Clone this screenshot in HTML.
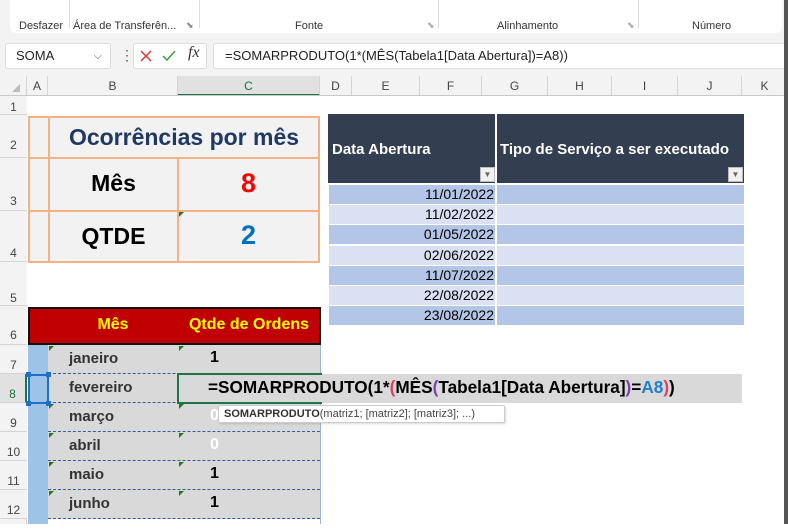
<!DOCTYPE html>
<html><head><meta charset="utf-8"><style>
*{margin:0;padding:0;box-sizing:border-box}
body{width:788px;height:524px;overflow:hidden;background:#fff;font-family:"Liberation Sans",Calibri,sans-serif;position:relative}
.a{position:absolute}
.rh{position:absolute;left:0;width:27px;text-align:center;font-size:12px;color:#444;background:#f3f3f3;border-bottom:1px solid #d4d4d4}
.ch{position:absolute;top:76px;height:20px;font-size:12px;color:#444;text-align:center;line-height:20px;border-right:1px solid #d4d4d4;background:#f3f3f3}
.dr{position:absolute;left:329px;width:415px;height:19px;font-size:14px;color:#000}
.dr span{position:absolute;left:0;width:166px;text-align:right;padding-right:1px;line-height:19px}
.gl{position:absolute;top:20px;font-size:11px;color:#333}
.mr{position:absolute;left:48px;width:272px;height:29px;background:#d9d9d9;border-bottom:1px dashed #3a5a9a;font-weight:bold;font-size:15px;color:#333}
.tri{position:absolute;width:0;height:0;border-top:5px solid #1e7a1e;border-right:5px solid transparent}
</style></head><body>
<div class="a" style="left:0;top:0;width:788px;height:36px;background:#f3f3f3"></div>
<div class="a" style="left:10px;top:0;width:772px;height:33px;background:#fff;border-radius:0 0 6px 6px"></div>
<div class="gl" style="left:19px">Desfazer</div>
<div class="a" style="left:69px;top:0;width:1px;height:28px;background:#ddd"></div>
<div class="gl" style="left:73px">Área de Transferên...</div>
<div class="gl" style="left:186px;font-size:9px;color:#888">⬊</div>
<div class="a" style="left:199px;top:0;width:1px;height:28px;background:#ddd"></div>
<div class="gl" style="left:295px">Fonte</div>
<div class="gl" style="left:427px;font-size:9px;color:#aaa">⬊</div>
<div class="a" style="left:438px;top:0;width:1px;height:28px;background:#ddd"></div>
<div class="gl" style="left:497px">Alinhamento</div>
<div class="gl" style="left:627px;font-size:9px;color:#aaa">⬊</div>
<div class="a" style="left:638px;top:0;width:1px;height:28px;background:#ddd"></div>
<div class="gl" style="left:692px">Número</div>
<div class="a" style="left:0;top:36px;width:788px;height:40px;background:#f3f3f3"></div>
<div class="a" style="left:5px;top:43px;width:106px;height:26px;background:#fff;border:1px solid #ddd;border-radius:3px;font-size:13px;line-height:24px;padding-left:10px;color:#222">SOMA<span style="position:absolute;right:8px;color:#555;font-size:11px">⌵</span></div>
<div class="a" style="left:120px;top:47px;font-size:14px;color:#555">⋮</div>
<div class="a" style="left:133px;top:43px;width:74px;height:26px;background:#fff;border:1px solid #ddd;border-radius:3px"></div>
<svg class="a" style="left:139px;top:49px" width="14" height="14"><path d="M2 2L12 12M12 2L2 12" stroke="#e03030" stroke-width="1.5"/></svg>
<svg class="a" style="left:161px;top:49px" width="16" height="14"><path d="M2 7L6 11L14 2" stroke="#3aa03a" stroke-width="1.5" fill="none"/></svg>
<div class="a" style="left:188px;top:44px;font-family:'Liberation Serif',serif;font-style:italic;font-size:16px;color:#333">fx</div>
<div class="a" style="left:213px;top:43px;width:575px;height:26px;background:#fff;border:1px solid #ddd;border-radius:3px;font-size:13px;line-height:24px;padding-left:11px;color:#222">=SOMARPRODUTO(1*(MÊS(Tabela1[Data Abertura])=A8))</div>
<div class="a" style="left:0;top:76px;width:27px;height:20px;background:#f3f3f3;border-right:1px solid #d4d4d4"></div>
<div class="a" style="left:12px;top:84px;border-bottom:8px solid #bbb;border-left:8px solid transparent"></div>
<div class="ch" style="left:27px;width:21px">A</div>
<div class="ch" style="left:48px;width:130px">B</div>
<div class="ch" style="left:178px;width:142px;background:#e1e1e1;color:#1e6e3e;border-bottom:2px solid #217346">C</div>
<div class="ch" style="left:320px;width:32px">D</div>
<div class="ch" style="left:352px;width:68px">E</div>
<div class="ch" style="left:420px;width:62px">F</div>
<div class="ch" style="left:482px;width:66px">G</div>
<div class="ch" style="left:548px;width:64px">H</div>
<div class="ch" style="left:612px;width:66px">I</div>
<div class="ch" style="left:678px;width:64px">J</div>
<div class="ch" style="left:742px;width:46px">K</div>
<div class="a" style="left:0;top:95px;width:788px;height:1px;background:#c8c8c8"></div>
<div class="a" style="left:0;top:96px;width:27px;height:428px;background:#f3f3f3;border-right:1px solid #d4d4d4"></div>
<div class="rh" style="top:96px;height:19px;line-height:22px">1</div>
<div class="rh" style="top:115px;height:43px;line-height:60px">2</div>
<div class="rh" style="top:158px;height:53px;line-height:86px">3</div>
<div class="rh" style="top:211px;height:51px;line-height:84px">4</div>
<div class="rh" style="top:262px;height:44px;line-height:72px">5</div>
<div class="rh" style="top:306px;height:39px;line-height:58px">6</div>
<div class="rh" style="top:345px;height:29px;line-height:40px">7</div>
<div class="rh" style="top:374px;height:29px;line-height:40px;background:#e1e1e1;color:#1e6e3e;border-right:2px solid #217346">8</div>
<div class="rh" style="top:403px;height:29px;line-height:40px">9</div>
<div class="rh" style="top:432px;height:29px;line-height:40px">10</div>
<div class="rh" style="top:461px;height:29px;line-height:40px">11</div>
<div class="rh" style="top:490px;height:29px;line-height:40px">12</div>
<div class="a" style="left:28px;top:116px;width:292px;height:147px;background:#f2f2f2;border:2px solid #f4b183"></div>
<div class="a" style="left:48px;top:116px;width:2px;height:147px;background:#f4b183"></div>
<div class="a" style="left:28px;top:157px;width:292px;height:2px;background:#f4b183"></div>
<div class="a" style="left:28px;top:210px;width:292px;height:2px;background:#f4b183"></div>
<div class="a" style="left:177px;top:157px;width:2px;height:106px;background:#f4b183"></div>
<div class="a" style="left:50px;top:124px;width:268px;text-align:center;font-size:23px;font-weight:bold;color:#1f3864;white-space:nowrap">Ocorrências por mês</div>
<div class="a" style="left:50px;top:170px;width:127px;text-align:center;font-size:23px;font-weight:bold;color:#000">Mês</div>
<div class="a" style="left:179px;top:168px;width:139px;text-align:center;font-size:27px;font-weight:bold;color:#ff0000">8</div>
<div class="a" style="left:50px;top:223px;width:127px;text-align:center;font-size:23px;font-weight:bold;color:#000">QTDE</div>
<div class="a" style="left:179px;top:220px;width:139px;text-align:center;font-size:27px;font-weight:bold;color:#0070c0">2</div>
<div class="tri" style="left:179px;top:212px"></div>
<div class="a" style="left:328px;top:114px;width:416px;height:69px;background:#333f50"></div>
<div class="a" style="left:495px;top:114px;width:2px;height:69px;background:#fff"></div>
<div class="a" style="left:332px;top:141px;font-size:15px;font-weight:bold;color:#fff">Data Abertura</div>
<div class="a" style="left:500px;top:141px;font-size:15px;font-weight:bold;color:#fff;white-space:nowrap">Tipo de Serviço a ser executado</div>
<div class="a" style="left:480px;top:167px;width:15px;height:15px;background:#f0f0f0;border:1px solid #bbb;font-size:8px;color:#666;text-align:center;line-height:13px">▼</div>
<div class="a" style="left:728px;top:167px;width:15px;height:15px;background:#f0f0f0;border:1px solid #bbb;font-size:8px;color:#666;text-align:center;line-height:13px">▼</div>
<div class="dr" style="top:185px;background:#b4c6e7"><span>11/01/2022</span></div>
<div class="dr" style="top:205px;background:#d9e1f2"><span>11/02/2022</span></div>
<div class="dr" style="top:225px;background:#b4c6e7"><span>01/05/2022</span></div>
<div class="dr" style="top:246px;background:#d9e1f2"><span>02/06/2022</span></div>
<div class="dr" style="top:266px;background:#b4c6e7"><span>11/07/2022</span></div>
<div class="dr" style="top:286px;background:#d9e1f2"><span>22/08/2022</span></div>
<div class="dr" style="top:306px;background:#b4c6e7"><span>23/08/2022</span></div>
<div class="a" style="left:495px;top:185px;width:2px;height:141px;background:#fff"></div>
<div class="a" style="left:28px;top:307px;width:293px;height:38px;background:#c00000;border:2px solid #111"></div>
<div class="a" style="left:48px;top:316px;width:130px;text-align:center;font-size:16px;font-weight:bold;color:#ffff00">Mês</div>
<div class="a" style="left:172px;top:316px;width:154px;text-align:center;font-size:16px;font-weight:bold;color:#ffff00;white-space:nowrap">Qtde de Ordens</div>
<div class="a" style="left:28px;top:345px;width:20px;height:179px;background:#9dc3e6"></div>
<div class="mr" style="top:345px"><span class="a" style="left:21px;top:5px">janeiro</span><span class="a" style="left:162px;top:4px;font-size:16px;color:#000">1</span></div>
<div class="mr" style="top:374px"><span class="a" style="left:21px;top:5px">fevereiro</span></div>
<div class="mr" style="top:403px"><span class="a" style="left:21px;top:5px">março</span><span class="a" style="left:162px;top:4px;font-size:16px;color:#fff">0</span></div>
<div class="mr" style="top:432px"><span class="a" style="left:21px;top:5px">abril</span><span class="a" style="left:162px;top:4px;font-size:16px;color:#fff">0</span></div>
<div class="mr" style="top:461px"><span class="a" style="left:21px;top:5px">maio</span><span class="a" style="left:162px;top:4px;font-size:16px;color:#000">1</span></div>
<div class="mr" style="top:490px"><span class="a" style="left:21px;top:5px">junho</span><span class="a" style="left:162px;top:4px;font-size:16px;color:#000">1</span></div>
<div class="a" style="left:320px;top:345px;width:1px;height:179px;background:#9db3dd"></div>
<div class="tri" style="left:49px;top:346px"></div><div class="tri" style="left:179px;top:346px"></div>
<div class="tri" style="left:49px;top:404px"></div><div class="tri" style="left:179px;top:404px"></div>
<div class="tri" style="left:49px;top:433px"></div><div class="tri" style="left:179px;top:433px"></div>
<div class="tri" style="left:49px;top:462px"></div><div class="tri" style="left:179px;top:462px"></div>
<div class="tri" style="left:49px;top:491px"></div><div class="tri" style="left:179px;top:491px"></div>
<div class="a" style="left:28px;top:374px;width:21px;height:30px;border:2px solid #1f6fc5"></div>
<div class="a" style="left:26px;top:372px;width:5px;height:5px;background:#1f6fc5"></div>
<div class="a" style="left:46px;top:372px;width:5px;height:5px;background:#1f6fc5"></div>
<div class="a" style="left:26px;top:401px;width:5px;height:5px;background:#1f6fc5"></div>
<div class="a" style="left:46px;top:401px;width:5px;height:5px;background:#1f6fc5"></div>
<div class="a" style="left:178px;top:374px;width:564px;height:29px;background:#d9d9d9"></div>
<div class="a" style="left:177px;top:373px;width:145px;height:31px;border:2px solid #217346;border-right:none"></div>
<div class="a" style="left:208px;top:377px;font-size:17.2px;font-weight:bold;color:#000;white-space:nowrap">=SOMARPRODUTO(1*<span style="color:#e04060">(</span>MÊS<span style="color:#8040b0">(</span>Tabela1[Data Abertura]<span style="color:#8040b0">)</span>=<span style="color:#1f7fd0">A8</span><span style="color:#e04060">)</span>)</div>
<div class="tri" style="left:179px;top:403px"></div>
<div class="a" style="left:218px;top:405px;width:287px;height:18px;background:#fff;border:1px solid #ccc;border-radius:2px;font-size:11px;line-height:16px;padding-left:5px;color:#444;white-space:nowrap;box-shadow:1px 1px 2px rgba(0,0,0,.15)"><b style="color:#333">SOMARPRODUTO</b>(matriz1; [matriz2]; [matriz3]; ...)</div>
<div class="a" style="left:784px;top:0;width:4px;height:524px;background:#555"></div>
</body></html>
